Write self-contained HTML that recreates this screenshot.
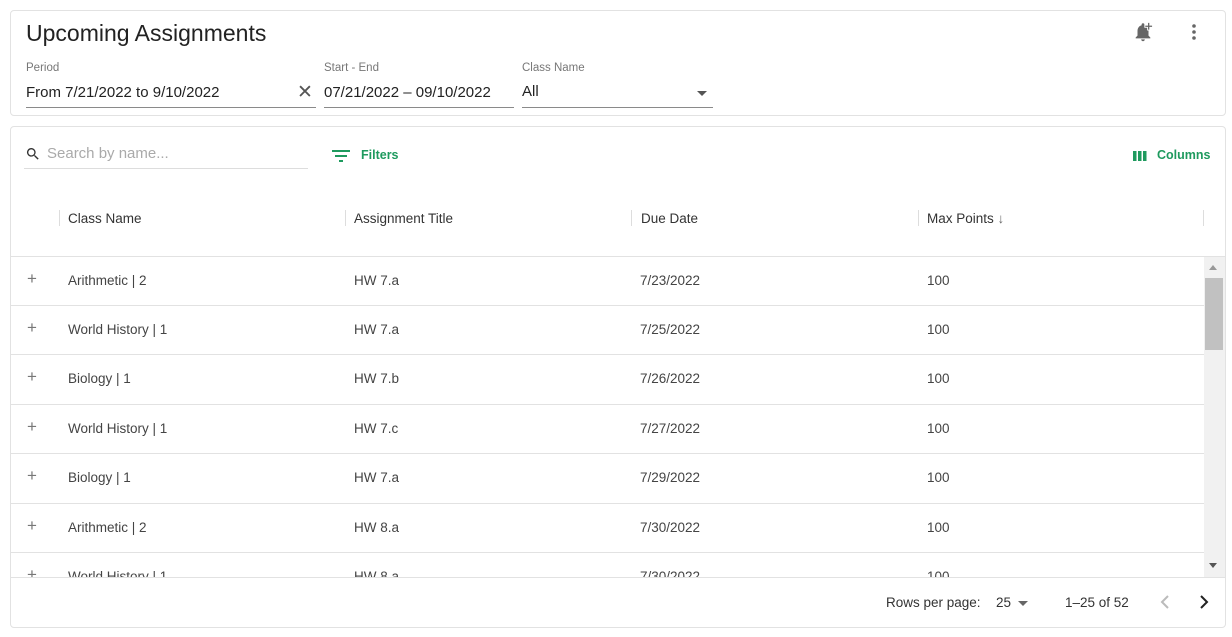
<!DOCTYPE html>
<html><head><style>
*{box-sizing:border-box;margin:0;padding:0}
body{width:1232px;height:637px;background:#fff;font-family:"Liberation Sans",sans-serif;color:#333;position:relative;overflow:hidden}
.card{position:absolute;border:1px solid #e2e2e2;border-radius:4px;background:#fff}
.abs{position:absolute;white-space:nowrap}
.lbl{font-size:11.5px;color:#777}
.val{font-size:15px;color:#222}
.ul{position:absolute;height:1px;background:#8a8a8a}
.hdr{font-size:13.5px;color:#333;top:211px}
.sep{position:absolute;top:210px;width:1px;height:16px;background:#ddd}
.row{position:absolute;left:11px;width:1193px;height:49px;border-bottom:1px solid #e2e2e2;font-size:13.5px;color:#444}
.row span{position:absolute;top:16px;white-space:nowrap}
.row span.p{left:16px;font-size:17px;top:12px;color:#777;font-weight:300}
</style></head><body>
<div class="card" style="left:10px;top:10px;width:1216px;height:106px"></div>
<div class="abs" style="left:26px;top:20px;font-size:23px;color:#222">Upcoming Assignments</div>
<svg class="abs" style="left:1132px;top:21px" width="22" height="22" viewBox="0 0 24 24"><path fill="#666" d="M12 22c1.1 0 2-.9 2-2h-4c0 1.1.9 2 2 2zm6-6v-5c0-3-1.6-5.6-4.5-6.3V4a1.5 1.5 0 0 0-3 0v.7C7.6 5.4 6 8 6 11v5l-2 2v1h16v-1l-2-2z"/><path fill="#666" stroke="#fff" stroke-width="1" d="M17 1.5h2.4v3h3v2.4h-3v3H17v-3h-3V4.5h3z"/></svg>
<svg class="abs" style="left:1184px;top:21px" width="20" height="22" viewBox="0 0 20 22"><circle cx="10" cy="5" r="1.8" fill="#666"/><circle cx="10" cy="11" r="1.8" fill="#666"/><circle cx="10" cy="17" r="1.8" fill="#666"/></svg>
<div class="abs lbl" style="left:26px;top:62px">Period</div>
<div class="abs val" style="left:26px;top:84px">From 7/21/2022 to 9/10/2022</div>
<div class="abs" style="left:297px;top:81px;font-size:19px;color:#555">✕</div>
<div class="ul" style="left:26px;top:107px;width:290px"></div>
<div class="abs lbl" style="left:324px;top:62px">Start - End</div>
<div class="abs val" style="left:324px;top:84px">07/21/2022 – 09/10/2022</div>
<div class="ul" style="left:324px;top:107px;width:190px"></div>
<div class="abs lbl" style="left:522px;top:62px">Class Name</div>
<div class="abs val" style="left:522px;top:83px">All</div>
<div class="abs" style="left:697px;top:91px;width:0;height:0;border-left:5px solid transparent;border-right:5px solid transparent;border-top:5px solid #555"></div>
<div class="ul" style="left:522px;top:107px;width:191px"></div>

<div class="card" style="left:10px;top:126px;width:1216px;height:502px"></div>
<svg class="abs" style="left:25px;top:146px" width="16" height="16" viewBox="0 0 24 24"><path fill="#333" d="M15.5 14h-.8l-.3-.3A6.5 6.5 0 1 0 9.5 16a6.5 6.5 0 0 0 4.2-1.6l.3.3v.8l5 5 1.5-1.5-5-5zm-6 0a4.5 4.5 0 1 1 0-9 4.5 4.5 0 0 1 0 9z"/></svg>
<div class="abs" style="left:47px;top:145px;font-size:15px;color:#aaa">Search by name...</div>
<div class="ul" style="left:24px;top:168px;width:284px;background:#ddd"></div>
<svg class="abs" style="left:331px;top:147px" width="20" height="18" viewBox="0 0 20 18"><path fill="#1e9a5e" d="M1 3h18v2H1zM4 8h12v2H4zM8 13h4v2H8z"/></svg>
<div class="abs" style="left:361px;top:148px;font-size:12.5px;font-weight:bold;color:#1e9a5e">Filters</div>
<svg class="abs" style="left:1132px;top:150px" width="16" height="12" viewBox="0 0 16 12"><path fill="#1e9a5e" d="M1 1h3.5v10H1zM6 1h3.5v10H6zM11 1h3.5v10H11z"/></svg>
<div class="abs" style="left:1157px;top:148px;font-size:12.5px;font-weight:bold;color:#1e9a5e">Columns</div>

<div class="sep" style="left:59px"></div><div class="abs hdr" style="left:68px">Class Name</div>
<div class="sep" style="left:345px"></div><div class="abs hdr" style="left:354px">Assignment Title</div>
<div class="sep" style="left:631px"></div><div class="abs hdr" style="left:641px">Due Date</div>
<div class="sep" style="left:918px"></div><div class="abs hdr" style="left:927px">Max Points <span style="color:#666">↓</span></div>
<div class="sep" style="left:1203px"></div>
<div class="abs" style="left:11px;top:256px;width:1214px;height:1px;background:#e2e2e2"></div>

<div style="position:absolute;left:11px;top:257px;width:1193px;height:320px;overflow:hidden">
<div class="row" style="top:0;left:0"><span class="p">+</span><span style="left:57px">Arithmetic | 2</span><span style="left:343px">HW 7.a</span><span style="left:629px">7/23/2022</span><span style="left:916px">100</span></div>
<div class="row" style="top:49px;left:0"><span class="p">+</span><span style="left:57px">World History | 1</span><span style="left:343px">HW 7.a</span><span style="left:629px">7/25/2022</span><span style="left:916px">100</span></div>
<div class="row" style="top:98px;left:0;height:50px"><span class="p">+</span><span style="left:57px">Biology | 1</span><span style="left:343px">HW 7.b</span><span style="left:629px">7/26/2022</span><span style="left:916px">100</span></div>
<div class="row" style="top:148px;left:0"><span class="p">+</span><span style="left:57px">World History | 1</span><span style="left:343px">HW 7.c</span><span style="left:629px">7/27/2022</span><span style="left:916px">100</span></div>
<div class="row" style="top:197px;left:0;height:50px"><span class="p">+</span><span style="left:57px">Biology | 1</span><span style="left:343px">HW 7.a</span><span style="left:629px">7/29/2022</span><span style="left:916px">100</span></div>
<div class="row" style="top:247px;left:0"><span class="p">+</span><span style="left:57px">Arithmetic | 2</span><span style="left:343px">HW 8.a</span><span style="left:629px">7/30/2022</span><span style="left:916px">100</span></div>
<div class="row" style="top:296px;left:0"><span class="p">+</span><span style="left:57px">World History | 1</span><span style="left:343px">HW 8.a</span><span style="left:629px">7/30/2022</span><span style="left:916px">100</span></div>
</div>
<div class="abs" style="left:1204px;top:257px;width:21px;height:320px;background:#f1f1f1"></div>
<div class="abs" style="left:1205px;top:278px;width:18px;height:72px;background:#c1c1c1"></div>
<div class="abs" style="left:1209px;top:265px;border-left:4px solid transparent;border-right:4px solid transparent;border-bottom:5px solid #999"></div>
<div class="abs" style="left:1209px;top:563px;border-left:4px solid transparent;border-right:4px solid transparent;border-top:5px solid #555"></div>
<div class="abs" style="left:11px;top:577px;width:1214px;height:1px;background:#e2e2e2"></div>

<div class="abs" style="left:886px;top:595px;font-size:13.5px;color:#333">Rows per page:</div>
<div class="abs" style="left:996px;top:595px;font-size:13.5px;color:#333">25</div>
<div class="abs" style="left:1018px;top:601px;border-left:5px solid transparent;border-right:5px solid transparent;border-top:5px solid #666"></div>
<div class="abs" style="left:1065px;top:595px;font-size:13.5px;color:#333">1–25 of 52</div>
<svg class="abs" style="left:1158px;top:594px" width="14" height="16" viewBox="0 0 14 16"><path d="M10 2L4 8l6 6" stroke="#bbb" stroke-width="2" fill="none"/></svg>
<svg class="abs" style="left:1197px;top:594px" width="14" height="16" viewBox="0 0 14 16"><path d="M4 2l6 6-6 6" stroke="#222" stroke-width="2" fill="none"/></svg>
</body></html>
